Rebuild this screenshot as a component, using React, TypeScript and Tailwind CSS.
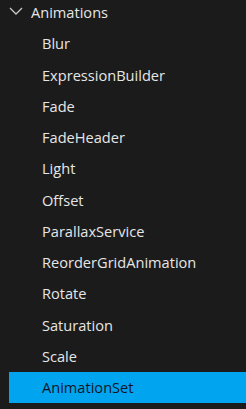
import React from "react";

const items = [
  "Blur",
  "ExpressionBuilder",
  "Fade",
  "FadeHeader",
  "Light",
  "Offset",
  "ParallaxService",
  "ReorderGridAnimation",
  "Rotate",
  "Saturation",
  "Scale",
  "AnimationSet",
];

export default function App() {
  return (
    <div
      className="w-[246px] h-[409px] bg-[#1b1b1b] overflow-hidden"
      style={{ fontFamily: '"Open Sans", "Noto Sans", sans-serif' }}
    >
      <div className="h-[28px] flex items-center">
        <div className="w-[31px] flex justify-end pr-[8px]">
          <svg width="14" height="8" viewBox="0 0 14 8" className="-mt-[6px]">
            <path d="M1 1 L7 7 L13 1" fill="none" stroke="#c8c8c8" strokeWidth="1.3" />
          </svg>
        </div>
        <span className="text-[14.6px] text-[#e6e6e6] -mt-[2px]">Animations</span>
      </div>
      {items.map((it, i) => {
        const sel = i === items.length - 1;
        return (
          <div
            key={it}
            className={
              sel
                ? "h-[31.25px] ml-[9px] pl-[33px] flex items-center bg-[#00a4ef] text-[#141428]"
                : "h-[31.25px] ml-[9px] pl-[33px] flex items-center text-[#e6e6e6]"
            }
          >
            <span className="text-[14.6px] leading-none">{it}</span>
          </div>
        );
      })}
    </div>
  );
}
